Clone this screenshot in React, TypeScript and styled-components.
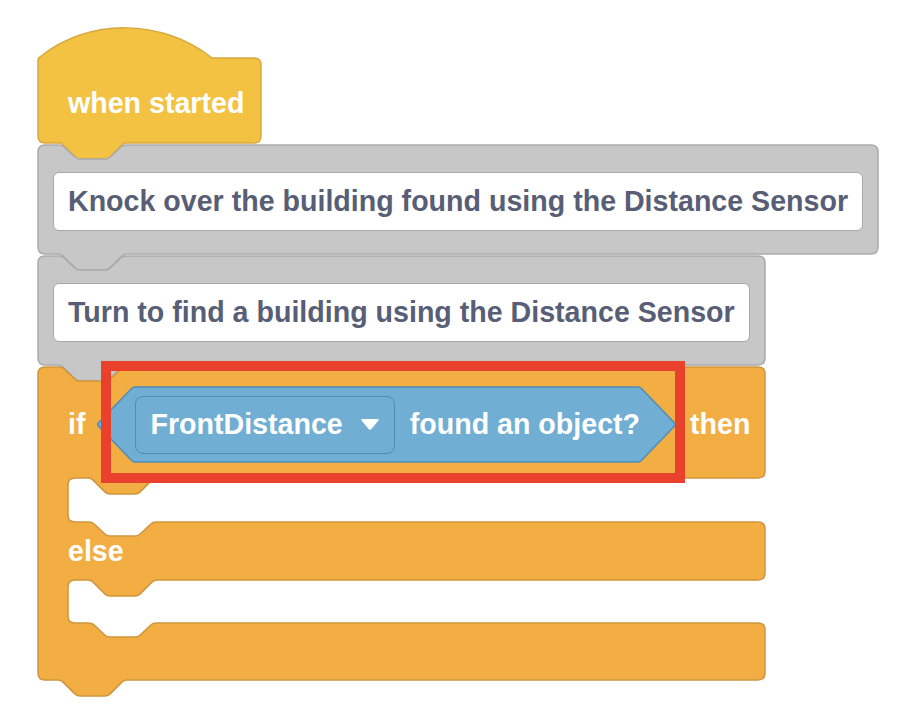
import React, { useLayoutEffect, useRef, useState } from "react";
import styled, { createGlobalStyle } from "styled-components";

const GlobalStyle = createGlobalStyle`
  *, *::before, *::after { box-sizing: border-box; }
  html, body { margin: 0; padding: 0; background: #ffffff; }
  body { font-family: "Liberation Sans", Arial, Helvetica, sans-serif; }
`;

const colors = {
  hat: "#f3c243",
  hatEdge: "#d6a93f",
  cmd: "#c7c7c7",
  cmdEdge: "#aaaaaa",
  control: "#f2ae43",
  controlEdge: "#cf953d",
  sensing: "#70aed4",
  sensingEdge: "#4f8cb7",
  ink: "#575e75",
  highlight: "#e9412b",
};

type Pt = [number, number, number?];

// closed polygon with rounded corners
const roundPath = (pts: Pt[]) => {
  const n = pts.length;
  let d = "";
  for (let i = 0; i < n; i++) {
    const [x, y, r = 0] = pts[i];
    const [px, py] = pts[(i - 1 + n) % n];
    const [nx, ny] = pts[(i + 1) % n];
    const l1 = Math.hypot(x - px, y - py) || 1;
    const l2 = Math.hypot(nx - x, ny - y) || 1;
    const k = Math.min(r, l1 / 2, l2 / 2);
    const ax = x + ((px - x) / l1) * k;
    const ay = y + ((py - y) / l1) * k;
    const bx = x + ((nx - x) / l2) * k;
    const by = y + ((ny - y) / l2) * k;
    d += `${i ? "L" : "M"} ${ax} ${ay} Q ${x} ${y} ${bx} ${by} `;
  }
  return d + "Z";
};

// socket cut into a top edge (left to right)
const notch = (x: number, y: number): Pt[] => [
  [x, y, 3],
  [x + 15, y + 14, 3],
  [x + 46, y + 14, 3],
  [x + 61, y, 3],
];

// tab hanging under a bottom edge (right to left)
const tab = (x: number, y: number): Pt[] => [
  [x + 62, y, 3],
  [x + 46, y + 16, 3],
  [x + 15, y + 16, 3],
  [x - 1, y, 3],
];

const R = 7;

const stackShape = (w: number, h: number) =>
  roundPath([[0, 0, R], ...notch(24, 0), [w, 0, R], [w, h, R], ...tab(24, h), [0, h, R]]);

const hatShape = (w: number, h: number) => {
  const tabPts = tab(24, h)
    .map(([x, y]) => `L ${x} ${y}`)
    .join(" ");
  return `M 0 32 Q 0 30 2 29 C 50 -10 124 -10 174 30 H ${w - R} Q ${w} 30 ${w} ${30 + R} V ${h - R} Q ${w} ${h} ${w - R} ${h} ${tabPts} H ${R} Q 0 ${h} 0 ${h - R} Z`;
};

const ARM_IN = 30;
const IF_ROWS = { head: 111, mouth1: 44, elseArm: 58, mouth2: 43, foot: 57 };

const ifElseShape = (w: number) => {
  const a1 = IF_ROWS.head;
  const m1 = a1 + IF_ROWS.mouth1;
  const a2 = m1 + IF_ROWS.elseArm;
  const m2 = a2 + IF_ROWS.mouth2;
  const b = m2 + IF_ROWS.foot;
  const inner = ARM_IN + 24;
  return roundPath([
    [0, 0, R], ...notch(24, 0), [w, 0, R],
    [w, a1, R], ...tab(inner, a1), [ARM_IN, a1, R],
    [ARM_IN, m1, R], ...notch(inner, m1), [w, m1, R],
    [w, a2, R], ...tab(inner, a2), [ARM_IN, a2, R],
    [ARM_IN, m2, R], ...notch(inner, m2), [w, m2, R],
    [w, b, R], ...tab(24, b), [0, b, R],
  ]);
};

const hexShape = (w: number, h: number) =>
  roundPath([
    [0, h / 2, 2], [36, 0, 2], [w - 36, 0, 2],
    [w, h / 2, 2], [w - 36, h, 2], [36, h, 2],
  ]);

function useBox<T extends HTMLElement>() {
  const ref = useRef<T>(null);
  const [box, setBox] = useState({ w: 0, h: 0 });
  useLayoutEffect(() => {
    const el = ref.current;
    if (!el) return;
    const update = () => setBox({ w: el.offsetWidth, h: el.offsetHeight });
    update();
    const ro = new ResizeObserver(update);
    ro.observe(el);
    return () => ro.disconnect();
  }, []);
  return [ref, box] as const;
}

const ShapeSvg = styled.svg`
  position: absolute;
  left: 0;
  top: 0;
  overflow: visible;
  pointer-events: none;
`;

function Outline({ d, fill, stroke }: { d: string; fill: string; stroke: string }) {
  return (
    <ShapeSvg width="1" height="1">
      <path d={d} fill={fill} stroke={stroke} strokeWidth={1.5} strokeLinejoin="round" />
    </ShapeSvg>
  );
}

const Script = styled.div`
  display: flex;
  flex-direction: column;
  align-items: flex-start;
  gap: 2px;
  padding: 28px 0 40px 38px;
`;

const Label = styled.span<{ $dark?: boolean }>`
  position: relative;
  color: ${(p) => (p.$dark ? colors.ink : "#ffffff")};
  font-size: 28.6px;
  font-weight: 700;
  line-height: 1;
  white-space: nowrap;
`;

const HatFrame = styled.div`
  position: relative;
  display: flex;
  align-items: center;
  height: 115px;
  padding: 36px 17px 0 30px;
`;

const CommandFrame = styled.div`
  position: relative;
  display: flex;
  align-items: center;
  height: 109px;
  padding: 3px 15px 0 15px;
`;

const TextField = styled.div`
  position: relative;
  display: flex;
  align-items: center;
  height: 59px;
  padding: 0 14px;
  background: #ffffff;
  border: 1.5px solid #a8a8a8;
  border-radius: 6px;
`;

const IfFrame = styled.div`
  position: relative;
  display: flex;
  flex-direction: column;
`;

const HeadRow = styled.div`
  position: relative;
  display: flex;
  align-items: center;
  height: ${IF_ROWS.head}px;
  padding: 4px 15px 0 ${ARM_IN}px;
`;

const ArmRow = styled.div<{ $h: number }>`
  position: relative;
  display: flex;
  align-items: center;
  height: ${(p) => p.$h}px;
  padding-left: ${ARM_IN}px;
`;

const Mouth = styled.div<{ $h: number }>`
  height: ${(p) => p.$h}px;
`;

const PredicateFrame = styled.div`
  position: relative;
  display: inline-flex;
  align-items: center;
  gap: 15px;
  height: 75px;
  margin: 0 14px 0 12px;
  padding: 0 36px 0 38px;
`;

const Dropdown = styled.div`
  position: relative;
  display: flex;
  align-items: center;
  gap: 17px;
  height: 58px;
  padding: 0 14px;
  background: ${colors.sensing};
  border: 1.5px solid ${colors.sensingEdge};
  border-radius: 8px;
`;

const Caret = styled.svg`
  position: relative;
  display: block;
`;

const Highlight = styled.div`
  position: absolute;
  left: 4px;
  right: -9px;
  top: -26px;
  bottom: -21px;
  border: 10px solid ${colors.highlight};
  pointer-events: none;
`;

function HatBlock({ text }: { text: string }) {
  const [ref, box] = useBox<HTMLDivElement>();
  return (
    <HatFrame ref={ref}>
      {box.w > 0 && <Outline d={hatShape(box.w, box.h)} fill={colors.hat} stroke={colors.hatEdge} />}
      <Label>{text}</Label>
    </HatFrame>
  );
}

function CommentBlock({ text }: { text: string }) {
  const [ref, box] = useBox<HTMLDivElement>();
  return (
    <CommandFrame ref={ref}>
      {box.w > 0 && <Outline d={stackShape(box.w, box.h)} fill={colors.cmd} stroke={colors.cmdEdge} />}
      <TextField>
        <Label $dark>{text}</Label>
      </TextField>
    </CommandFrame>
  );
}

function Predicate({ sensor, text }: { sensor: string; text: string }) {
  const [ref, box] = useBox<HTMLDivElement>();
  return (
    <PredicateFrame ref={ref}>
      {box.w > 0 && <Outline d={hexShape(box.w, box.h)} fill={colors.sensing} stroke={colors.sensingEdge} />}
      <Dropdown>
        <Label>{sensor}</Label>
        <Caret width="20" height="13" viewBox="0 0 20 13">
          <path d="M2.5 1 H17.5 Q19.5 1 18.3 2.8 L11.4 11 Q10 12.6 8.6 11 L1.7 2.8 Q0.5 1 2.5 1 Z" fill="#ffffff" />
        </Caret>
      </Dropdown>
      <Label>{text}</Label>
      <Highlight />
    </PredicateFrame>
  );
}

function IfElseBlock() {
  const [ref, box] = useBox<HTMLDivElement>();
  return (
    <IfFrame ref={ref}>
      {box.w > 0 && <Outline d={ifElseShape(box.w)} fill={colors.control} stroke={colors.controlEdge} />}
      <HeadRow>
        <Label>if</Label>
        <Predicate sensor="FrontDistance" text="found an object?" />
        <Label>then</Label>
      </HeadRow>
      <Mouth $h={IF_ROWS.mouth1} />
      <ArmRow $h={IF_ROWS.elseArm}>
        <Label>else</Label>
      </ArmRow>
      <Mouth $h={IF_ROWS.mouth2} />
      <ArmRow $h={IF_ROWS.foot} />
    </IfFrame>
  );
}

export default function App() {
  return (
    <>
      <GlobalStyle />
      <Script>
        <HatBlock text="when started" />
        <CommentBlock text="Knock over the building found using the Distance Sensor" />
        <CommentBlock text="Turn to find a building using the Distance Sensor" />
        <IfElseBlock />
      </Script>
    </>
  );
}
